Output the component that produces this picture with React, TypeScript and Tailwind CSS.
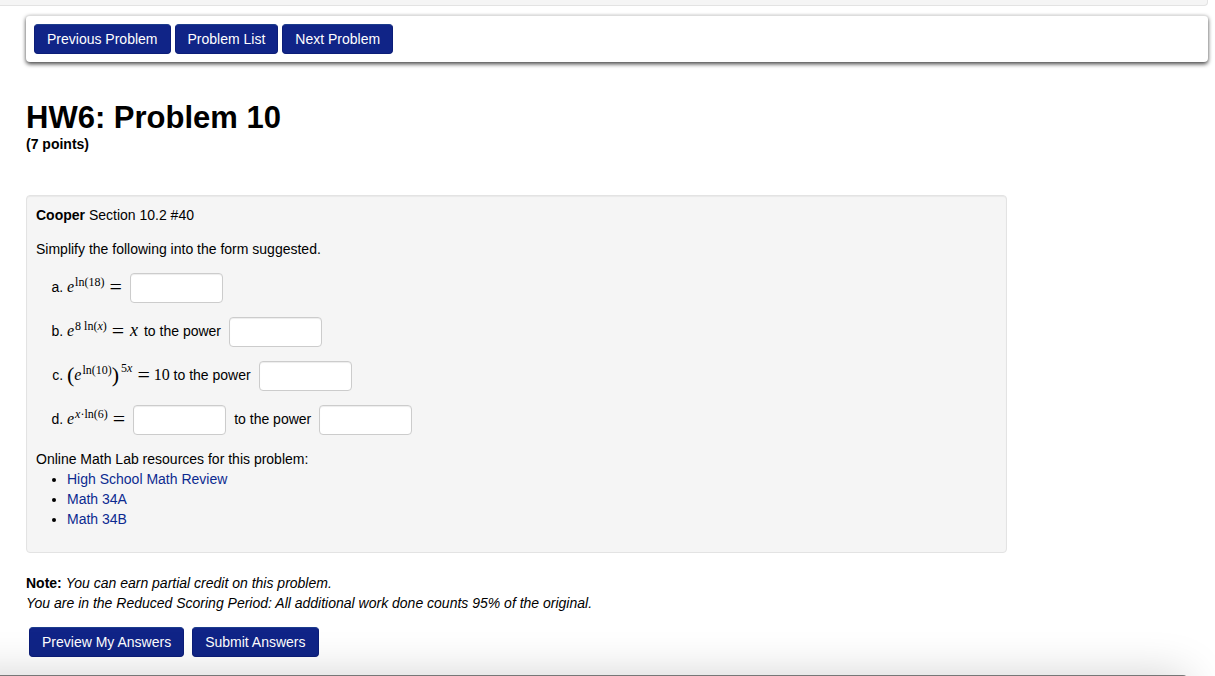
import type { ReactNode } from "react";

// Shared look of the dark blue buttons (navigation and answer submission)
const buttonClass =
  "h-[30px] rounded border border-[#0b1d78] border-t-[#1c3c8c] bg-[#102487] px-3 text-sm leading-5 text-white hover:bg-[#0b1b6b]";

// The resource links listed under the problem
const resources = ["High School Math Review", "Math 34A", "Math 34B"];

// Inline math, set in a serif face
function MathText({ children }: { children: ReactNode }) {
  return (
    <span className="font-['Liberation_Serif',serif] text-base leading-5 whitespace-nowrap">
      {children}
    </span>
  );
}

// Exponent raised above the base
function Exp({ children }: { children: ReactNode }) {
  return <sup className="ml-px text-[12px]">{children}</sup>;
}

// Bracket or relation drawn larger than the math around it, without
// making the line any taller
function BigSymbol({ children }: { children: ReactNode }) {
  return (
    <span className="align-[-2px] font-['Liberation_Serif',serif] text-[22px] leading-[0]">
      {children}
    </span>
  );
}

// The wide equals sign between both sides of an equation
function Equals() {
  return (
    <span className="ml-[5px]">
      <BigSymbol>=</BigSymbol>
    </span>
  );
}

// Blank for one answer
function AnswerInput({ id }: { id: string }) {
  return (
    <input
      id={id}
      name={id}
      type="text"
      className="mx-2 h-[30px] w-[93px] rounded border border-[#cccccc] bg-white px-1.5 text-sm shadow-[inset_0_1px_1px_rgba(0,0,0,0.075)]"
    />
  );
}

export default function App() {
  return (
    <div className="relative min-h-screen overflow-hidden bg-white pr-[7px] pb-[19px] font-['Liberation_Sans',Arial,sans-serif] text-sm leading-5 text-black">

      {/* ── Bottom edge of the breadcrumb bar ── */}
      <div className="h-1.5 rounded-br border-r border-b border-[#e3e3e3] bg-[#f5f5f5]" />

      <div className="pl-[26px]">

        {/* ── Problem navigation ── */}
        <nav className="mt-[9px] flex gap-1 rounded border-t border-[#dddddd] bg-white p-2 shadow-[0_2px_4px_rgba(0,0,0,0.75)]">
          <button type="button" className={buttonClass}>Previous Problem</button>
          <button type="button" className={buttonClass}>Problem List</button>
          <button type="button" className={buttonClass}>Next Problem</button>
        </nav>

        {/* ── Title ── */}
        <header className="mt-10">
          <h1 className="text-[31px] leading-8 font-bold">HW6: Problem 10</h1>
          <p className="font-bold">(7 points)</p>
        </header>

        <form onSubmit={(event) => event.preventDefault()}>

          {/* ── Problem body ── */}
          <section className="mt-[41px] w-[83%] rounded-sm border border-[#e3e3e3] bg-[#f5f5f5] px-[9px] pt-[9px] pb-[23px] shadow-[inset_0_1px_1px_rgba(0,0,0,0.05)]">
            <p><b>Cooper</b> Section 10.2 #40</p>
            <p className="mt-3.5">Simplify the following into the form suggested.</p>

            <ol className="my-3.5 list-[lower-alpha] space-y-3.5 pl-[31px]">
              <li>
                <div className="flex items-center">
                  <label htmlFor="answer-a" className="pb-0.5">
                    <MathText><i>e</i><Exp>ln(18)</Exp></MathText>
                    <Equals />
                  </label>
                  <AnswerInput id="answer-a" />
                </div>
              </li>
              <li>
                <div className="flex items-center">
                  <label htmlFor="answer-b" className="pb-0.5">
                    <MathText><i>e</i><Exp>8 ln(<i>x</i>)</Exp></MathText>
                    <Equals />{" "}
                    <MathText><i className="mx-0.5 text-lg leading-[0]">x</i></MathText> to the power
                  </label>
                  <AnswerInput id="answer-b" />
                </div>
              </li>
              <li>
                <div className="flex items-center">
                  <label htmlFor="answer-c" className="pb-0.5">
                    <MathText>
                      <BigSymbol>(</BigSymbol>
                      <i>e</i><Exp>ln(10)</Exp>
                      <BigSymbol>)</BigSymbol>
                      {/* Outer exponent sits above the closing bracket */}
                      <sup className="-top-2 ml-0.5 text-[12px]">5<i>x</i></sup>
                    </MathText>
                    <Equals />{" "}
                    <MathText>10</MathText> to the power
                  </label>
                  <AnswerInput id="answer-c" />
                </div>
              </li>
              <li>
                <div className="flex items-center">
                  <label htmlFor="answer-d-base" className="pb-0.5">
                    <MathText><i>e</i><Exp><i>x</i>·ln(6)</Exp></MathText>
                    <Equals />
                  </label>
                  <AnswerInput id="answer-d-base" />
                  <label htmlFor="answer-d-power" className="pb-0.5">to the power</label>
                  <AnswerInput id="answer-d-power" />
                </div>
              </li>
            </ol>

            <p>Online Math Lab resources for this problem:</p>
            <ul className="list-disc pl-[31px]">
              {resources.map((name) => (
                <li key={name}>
                  <a href="#" className="text-[#0c2a90] hover:underline">{name}</a>
                </li>
              ))}
            </ul>
          </section>

          {/* ── Scoring notes ── */}
          <p className="mt-5"><b>Note:</b> <i>You can earn partial credit on this problem.</i></p>
          <p><i>You are in the Reduced Scoring Period: All additional work done counts 95% of the original.</i></p>

          <div className="mt-3.5 ml-[3px] flex gap-2">
            <button type="submit" className={buttonClass}>Preview My Answers</button>
            <button type="submit" className={buttonClass}>Submit Answers</button>
          </div>
        </form>
      </div>

      {/* Panel that rises from below the window; only its top edge and shadow show */}
      <div className="pointer-events-none absolute right-7 -bottom-24 -left-12 h-[97px] rounded-sm bg-[#777777] shadow-[0_0_45px_rgba(0,0,0,0.18)]" />
    </div>
  );
}
